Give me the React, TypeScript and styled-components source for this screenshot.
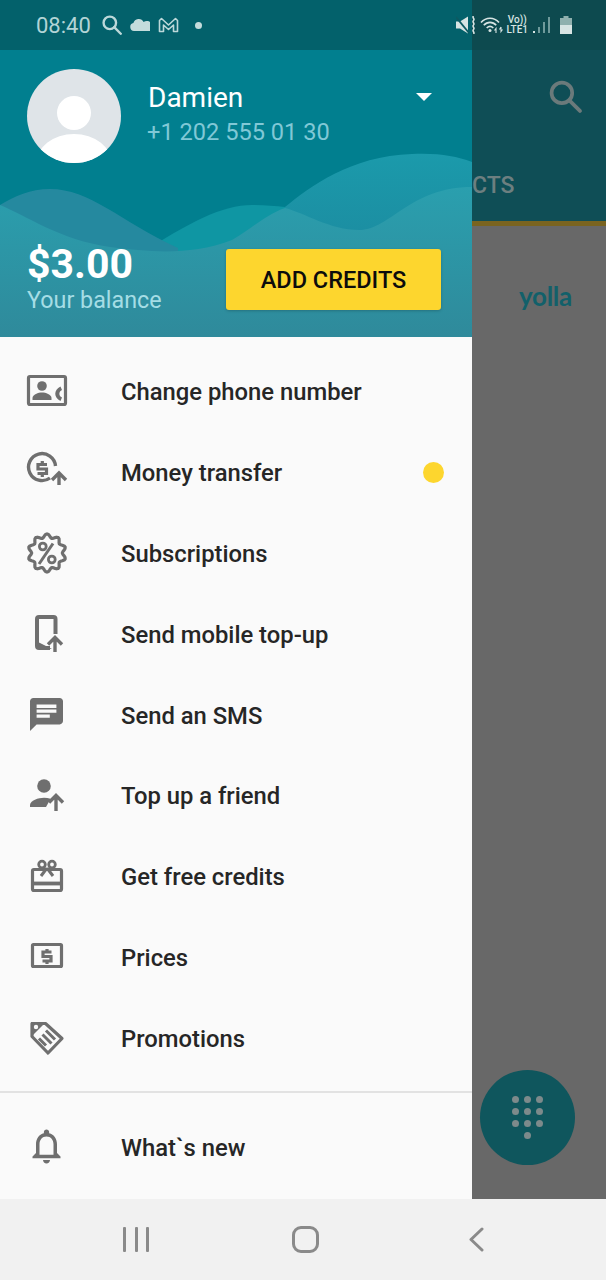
import React from "react"
import styled, { createGlobalStyle } from "styled-components"

const GlobalStyle = createGlobalStyle`
  html, body {
    margin: 0;
    padding: 0;
    background: #f1f1f1;
  }
  * {
    box-sizing: border-box;
  }
`

const ICON_GREY = "#6f6f6f"

// ten-lobed outline of the subscriptions badge
const badgeOutline = () => {
  const pts: string[] = []
  for (let i = 0; i < 80; i++) {
    const t = (i / 80) * Math.PI * 2
    const r = 17.2 + 1.9 * Math.cos(t * 10)
    const x = 22 + r * Math.sin(t)
    const y = 21 - r * Math.cos(t)
    pts.push(`${x.toFixed(2)} ${y.toFixed(2)}`)
  }
  return `M${pts.join("L")}Z`
}

const PhoneCardIcon = () => (
  <MenuSvg viewBox="0 0 44 44">
    <rect x="3.5" y="6.5" width="37" height="28" rx="1.5" fill="none" stroke={ICON_GREY} strokeWidth="3.2" />
    <circle cx="17" cy="16" r="4.8" fill={ICON_GREY} />
    <path d="M7.5 30v-2c0-3.6 5.9-5.600 9.500-5.600s9.500 2 9.500 5.600v2z" fill={ICON_GREY} />
    <path d="M35.500 16.500C28.500 20 28.500 27.500 35.500 31L37 27.500C33.500 26 33.500 21.500 37 20z" fill={ICON_GREY} />
  </MenuSvg>
)

const MoneyTransferIcon = () => (
  <MenuSvg viewBox="0 0 44 44">
    <path d="M30.500 15A13.500 13.500 0 1 0 25 27" fill="none" stroke={ICON_GREY} strokeWidth="3.400" />
    <path d="M22 13.500H13V18H21.500V22.500H12.500" fill="none" stroke={ICON_GREY} strokeWidth="3.200" />
    <path d="M17.300 10V13M17.300 23V26" stroke={ICON_GREY} strokeWidth="3.200" />
    <path d="M27 29L34 22L41 29M34 23V34" fill="none" stroke={ICON_GREY} strokeWidth="3.400" />
  </MenuSvg>
)

const DiscountBadgeIcon = () => (
  <MenuSvg viewBox="0 0 44 44">
    <path d={badgeOutline()} fill="none" stroke={ICON_GREY} strokeWidth="3.200" strokeLinejoin="round" />
    <circle cx="17.800" cy="14.500" r="3.400" fill="none" stroke={ICON_GREY} strokeWidth="2.800" />
    <circle cx="26.800" cy="27.500" r="3.400" fill="none" stroke={ICON_GREY} strokeWidth="2.800" />
    <path d="M28 11.500L14 32" stroke={ICON_GREY} strokeWidth="3" />
  </MenuSvg>
)

const MobileTopUpIcon = () => (
  <MenuSvg viewBox="0 0 44 44">
    <path d="M30.500 21V6a2 2 0 0 0-2-2H14a2 2 0 0 0-2 2V33a2 2 0 0 0 2 2H25" fill="none" stroke={ICON_GREY} strokeWidth="4" />
    <path d="M13 36V29L27 36z" fill={ICON_GREY} />
    <path d="M23 31.500L30 24.500L37 31.500M30 25.500V39" fill="none" stroke={ICON_GREY} strokeWidth="3.400" />
  </MenuSvg>
)

const MessageIcon = () => (
  <MenuSvg viewBox="0 0 44 44">
    <path
      transform="translate(1.700 .7) scale(1.650)"
      d="M20 2H4c-1.100 0-1.990.9-1.990 2L2 22l4-4h14c1.100 0 2-.9 2-2V4c0-1.100-.9-2-2-2zm-6 12H6v-2h8v2zm4-3H6V9h12v2zm0-3H6V6h12v2z"
      fill={ICON_GREY}
    />
  </MenuSvg>
)

const FriendTopUpIcon = () => (
  <MenuSvg viewBox="0 0 44 44">
    <circle cx="19" cy="12" r="6.800" fill={ICON_GREY} />
    <path d="M5 33v-2c0-4.500 8.500-7.300 14-7.300 2.200 0 4.500.4 6.600 1L21 33z" fill={ICON_GREY} />
    <path d="M24 28.500L31 21.500L38 28.500M31 22.500V37" fill="none" stroke={ICON_GREY} strokeWidth="3.400" />
  </MenuSvg>
)

const GiftCardIcon = () => (
  <MenuSvg viewBox="0 0 44 44">
    <rect x="7.500" y="14.500" width="29" height="21" rx="1.500" fill="none" stroke={ICON_GREY} strokeWidth="3.200" />
    <path d="M8 28.500H36" stroke={ICON_GREY} strokeWidth="3.800" />
    <circle cx="17" cy="9.500" r="3.300" fill="none" stroke={ICON_GREY} strokeWidth="2.800" />
    <circle cx="27" cy="9.500" r="3.300" fill="none" stroke={ICON_GREY} strokeWidth="2.800" />
    <path d="M22 13L16 21M22 13L28 21" stroke={ICON_GREY} strokeWidth="3" />
  </MenuSvg>
)

const PriceIcon = () => (
  <MenuSvg viewBox="0 0 44 44">
    <rect x="7.500" y="8.500" width="29" height="22" rx="1" fill="none" stroke={ICON_GREY} strokeWidth="3.200" />
    <path d="M26.500 16H18V20.500H26V25H17.500" fill="none" stroke={ICON_GREY} strokeWidth="3.200" />
    <path d="M22 13V16M22 25V28" stroke={ICON_GREY} strokeWidth="3.200" />
  </MenuSvg>
)

const TagIcon = () => (
  <MenuSvg viewBox="0 0 44 44">
    <path d="M7 6.500H20.500L37 21.500L23 36L7 19.500z" fill="none" stroke={ICON_GREY} strokeWidth="3.200" strokeLinejoin="round" />
    <path d="M6 5H21L6 20z" fill={ICON_GREY} />
    <circle cx="11" cy="10" r="2.200" fill="#fafafa" />
    <path d="M21 13.500L30 22.500M17.500 17.500L26.500 26.500M14 21.500L21 28.500" stroke={ICON_GREY} strokeWidth="3" />
  </MenuSvg>
)

const BellIcon = () => (
  <MenuSvg viewBox="0 0 44 44">
    <path
      transform="translate(.5 -1) scale(1.750)"
      d="M12 22c1.100 0 2-.9 2-2h-4c0 1.100.9 2 2 2zm6-6v-5c0-3.070-1.630-5.640-4.500-6.320V4c0-.83-.67-1.500-1.500-1.500s-1.500.67-1.500 1.500v.68C7.640 5.360 6 7.920 6 11v5l-2 2v1h16v-1l-2-2zm-2 1H8v-6c0-2.480 1.510-4.500 4-4.500s4 2.020 4 4.500v6z"
      fill={ICON_GREY}
    />
  </MenuSvg>
)

const SearchGlyph = ({ size, color, weight }: { size: number; color: string; weight: number }) => (
  <svg width={size} height={size} viewBox="0 0 32 32" style={{ display: "block" }}>
    <circle cx="12.500" cy="12.500" r="10" fill="none" stroke={color} strokeWidth={weight} />
    <path d="M19.500 19.500L30 30" stroke={color} strokeWidth={weight} strokeLinecap="round" />
  </svg>
)

const menuTop = [
  { label: "Change phone number", icon: <PhoneCardIcon /> },
  { label: "Money transfer", icon: <MoneyTransferIcon />, dot: true },
  { label: "Subscriptions", icon: <DiscountBadgeIcon /> },
  { label: "Send mobile top-up", icon: <MobileTopUpIcon /> },
  { label: "Send an SMS", icon: <MessageIcon /> },
  { label: "Top up a friend", icon: <FriendTopUpIcon /> },
  { label: "Get free credits", icon: <GiftCardIcon /> },
  { label: "Prices", icon: <PriceIcon /> },
  { label: "Promotions", icon: <TagIcon /> },
]

const App = () => {
  return (
    <Screen>
      <GlobalStyle />
      <StatusBar>
        <StatusGroup>
          <Clock>08:40</Clock>
          <SearchGlyph size={20} color="#bcd8d9" weight={3.800} />
          <svg width="20" height="12" viewBox="0 0 20 12">
            <path d="M4 12a4 4 0 0 1-.6-7.900A5.500 5.500 0 0 1 13.600 3 4.600 4.600 0 0 1 20 12z" fill="#c4dcdc" />
          </svg>
          <svg width="21" height="16" viewBox="0 0 21 16">
            <path d="M1.500 14.500V3.500L3.500 1.500L10.500 8L17.500 1.500L19.500 3.500V14.500H15.500V8L10.500 12.500L5.500 8V14.500z" fill="none" stroke="#bcd8d9" strokeWidth="1.600" strokeLinejoin="round" />
          </svg>
          <StatusDot />
        </StatusGroup>
        <StatusGroup $gap={4}>
          <svg width="20" height="18" viewBox="0 0 20 18">
            <path d="M0 5.500H4L12 .5V17.500L4 12.500H0z" fill="#d7e4e3" />
            <path d="M0 1L13 17" stroke="#0c5a62" strokeWidth="1.800" />
            <path d="M17.500 0c-1.800 1.500 1.800 3 0 4.500s1.800 3 0 4.500 1.800 3 0 4.500 1.800 3 0 4.500" fill="none" stroke="#d7e4e3" strokeWidth="1.600" />
          </svg>
          <svg width="23" height="18" viewBox="0 0 23 18">
            <path d="M1 6.500C6 .8 14 .8 19 6.500M3.800 9.200C7.300 5.300 12.700 5.300 16.200 9.200M6.700 12C8.700 10 11.300 10 13.300 12" fill="none" stroke="#d7e4e3" strokeWidth="1.700" />
            <circle cx="10" cy="14.500" r="1.500" fill="#d7e4e3" />
            <path d="M14.500 14.500L16 12.500V17M21 11V15.500L22.500 13.500M19.500 13.500L21 11" fill="none" stroke="#d7e4e3" strokeWidth="1.100" />
          </svg>
          <NetworkLabel>
            <span>Vo))</span>
            <span>LTE1</span>
          </NetworkLabel>
          <svg width="17" height="18" viewBox="0 0 17 18">
            <rect x="0" y="15" width="2" height="2" fill="#d7e4e3" />
            <rect x="5" y="11" width="2" height="6" fill="#6f9a9b" />
            <rect x="10" y="6" width="2" height="11" fill="#6f9a9b" />
            <rect x="15" y="1" width="2" height="16" fill="#6f9a9b" />
          </svg>
          <BatterySvg viewBox="0 0 12 18">
            <rect x="3.500" y="0" width="5" height="2" fill="#8fb0ae" />
            <rect x="0" y="2" width="12" height="7" fill="#8fb0ae" />
            <rect x="0" y="9" width="12" height="9" fill="#d7e4e3" />
          </BatterySvg>
        </StatusGroup>
      </StatusBar>

      <Content>
        <Drawer>
          <Header>
            <Waves viewBox="0 0 472 287" preserveAspectRatio="none">
              <defs>
                <linearGradient id="backShade" x1="0" y1="0" x2="0" y2="1">
                  <stop offset="0" stopColor="#1b9aab" />
                  <stop offset="0.6" stopColor="#1c8a9f" />
                </linearGradient>
                <linearGradient id="frontShade" x1="0" y1="0" x2="0" y2="1">
                  <stop offset="0" stopColor="#2a9fae" />
                  <stop offset="1" stopColor="#2f8a9b" />
                </linearGradient>
              </defs>
              <path d="M140 204C190 172 222 155 252 155C265 155 275 156 285 157V287H140z" fill="#0f96a3" />
              <path d="M0 155C15 146 30 139 50 139C90 139 118 170 178 198V287H0z" fill="#25899f" />
              <path d="M285 157C310 137 350 106 412 104C440 103 455 106 472 112V287H285z" fill="url(#backShade)" />
              <path d="M0 155C25 165 60 190 110 197C150 202 190 206 232 190C250 180 265 165 285 158C305 163 330 180 359 180C390 180 410 137 472 137V287H0z" fill="url(#frontShade)" />
            </Waves>
            <Account>
              <Avatar>
                <AvatarHead />
                <AvatarBody />
              </Avatar>
              <UserInfo>
                <UserName>Damien</UserName>
                <UserPhone>+1 202 555 01 30</UserPhone>
              </UserInfo>
              <AccountCaret />
            </Account>
            <BalanceRow>
              <Balance>
                <Amount>$3.00</Amount>
                <AmountLabel>Your balance</AmountLabel>
              </Balance>
              <AddCredits>ADD CREDITS</AddCredits>
            </BalanceRow>
          </Header>

          <Menu>
            <MenuGroup>
              {menuTop.map((item) => (
                <MenuRow key={item.label}>
                  <IconSlot>{item.icon}</IconSlot>
                  <MenuLabel>{item.label}</MenuLabel>
                  {item.dot && <NewDot />}
                </MenuRow>
              ))}
            </MenuGroup>
            <BottomGroup>
              <MenuRow>
                <IconSlot>
                  <BellIcon />
                </IconSlot>
                <MenuLabel>What`s new</MenuLabel>
              </MenuRow>
            </BottomGroup>
          </Menu>
        </Drawer>

        <Behind>
          <BehindBar>
            <BehindSearch>
              <SearchGlyph size={33} color="#6b7a7b" weight={3.600} />
            </BehindSearch>
            <BehindTab>CTS</BehindTab>
          </BehindBar>
          <BehindBody>
            <BrandName>yolla</BrandName>
          </BehindBody>
          <DialButton>
            <DialGrid>
              {Array.from({ length: 9 }, (_, i) => (
                <DialDot key={i} />
              ))}
              <DialDot $col={2} />
            </DialGrid>
          </DialButton>
        </Behind>
      </Content>

      <NavBar>
        <NavRecents>
          <i />
          <i />
          <i />
        </NavRecents>
        <NavHome />
        <svg width="16" height="25" viewBox="0 0 16 25">
          <path d="M14 2L3 12.500L14 23" fill="none" stroke="#8a8a8a" strokeWidth="3" strokeLinecap="round" strokeLinejoin="round" />
        </svg>
      </NavBar>
    </Screen>
  )
}

const Screen = styled.div`
  width: 606px;
  height: 1280px;
  display: flex;
  flex-direction: column;
  overflow: hidden;
  font-family: Roboto, "Liberation Sans", sans-serif;
`

const StatusBar = styled.div`
  height: 50px;
  flex: none;
  display: flex;
  align-items: center;
  justify-content: space-between;
  padding: 0 34px 0 36px;
  background: linear-gradient(to right, #03616b 472px, #0d4a4f 472px);
`

const StatusGroup = styled.div<{ $gap?: number }>`
  display: flex;
  align-items: center;
  gap: ${(p) => p.$gap ?? 8}px;
`

const Clock = styled.span`
  font-size: 22px;
  color: #b2d4d6;
  margin-right: 3px;
`

const StatusDot = styled.span`
  width: 7px;
  height: 7px;
  margin-left: 8px;
  border-radius: 50%;
  background: #c4dcdc;
`

const NetworkLabel = styled.div`
  display: flex;
  flex-direction: column;
  align-items: center;
  margin: 0 1px 0 -1px;
  font-size: 10px;
  line-height: 10px;
  font-weight: 500;
  color: #d7e4e3;
`

const BatterySvg = styled.svg`
  width: 12px;
  height: 18px;
  margin-left: 6px;
`

const Content = styled.div`
  flex: 1;
  min-height: 0;
  display: flex;
`

const Drawer = styled.div`
  width: 472px;
  flex: none;
  display: flex;
  flex-direction: column;
  background: #fafafa;
`

const Header = styled.div`
  position: relative;
  height: 287px;
  flex: none;
  display: flex;
  flex-direction: column;
  justify-content: space-between;
  padding: 19px 31px 23px 27px;
  background: #017f8f;
`

const Waves = styled.svg`
  position: absolute;
  inset: 0;
  width: 100%;
  height: 100%;
`

const Account = styled.div`
  position: relative;
  display: flex;
  align-items: flex-start;
  gap: 27px;
`

const Avatar = styled.div`
  position: relative;
  width: 94px;
  height: 94px;
  flex: none;
  border-radius: 50%;
  overflow: hidden;
  background: #dfe4e8;
`

const AvatarHead = styled.div`
  position: absolute;
  top: 27px;
  left: 30px;
  width: 34px;
  height: 34px;
  border-radius: 50%;
  background: #fff;
`

const AvatarBody = styled.div`
  position: absolute;
  top: 65px;
  left: 9px;
  width: 76px;
  height: 60px;
  border-radius: 50%;
  background: #fff;
`

const UserInfo = styled.div`
  flex: 1;
  padding-top: 11px;
`

const UserName = styled.div`
  font-size: 28px;
  line-height: 36px;
  color: #fff;
`

const UserPhone = styled.div`
  font-size: 23.600px;
  line-height: 32px;
  margin-left: -1px;
  color: #80c8d6;
`

const AccountCaret = styled.div`
  width: 0;
  height: 0;
  margin: 24px 9px 0 0;
  border-left: 8px solid transparent;
  border-right: 8px solid transparent;
  border-top: 8px solid #fff;
`

const BalanceRow = styled.div`
  position: relative;
  display: flex;
  align-items: flex-end;
  justify-content: space-between;
`

const Balance = styled.div`
  display: flex;
  flex-direction: column;
`

const Amount = styled.div`
  font-size: 41px;
  line-height: 44px;
  font-weight: 700;
  color: #fff;
`

const AmountLabel = styled.div`
  font-size: 23.300px;
  line-height: 28px;
  color: #a5dde5;
`

const AddCredits = styled.button`
  width: 215px;
  height: 61px;
  margin-bottom: 4px;
  border: 0;
  border-radius: 3px;
  background: #fdd62e;
  box-shadow: 0 1px 3px rgba(0, 0, 0, 0.2);
  font-family: inherit;
  font-size: 23.500px;
  font-weight: 500;
  color: #0c0c0c;
`

const Menu = styled.div`
  flex: 1;
  display: flex;
  flex-direction: column;
  padding-top: 14.500px;
`

const MenuGroup = styled.div`
  display: flex;
  flex-direction: column;
  padding-bottom: 11.500px;
  border-bottom: 2px solid #e2e2e2;
`

const BottomGroup = styled.div`
  padding-top: 14.500px;
`

const MenuRow = styled.div`
  height: 80.900px;
  display: flex;
  align-items: center;
  gap: 52px;
  padding: 0 28px 0 25px;
`

const IconSlot = styled.div`
  width: 44px;
  height: 44px;
  flex: none;
`

const MenuSvg = styled.svg`
  display: block;
  width: 44px;
  height: 44px;
`

const MenuLabel = styled.div`
  flex: 1;
  font-size: 23.800px;
  font-weight: 500;
  color: #262626;
`

const NewDot = styled.span`
  width: 21px;
  height: 21px;
  border-radius: 50%;
  background: #fdd62e;
`

const Behind = styled.div`
  position: relative;
  flex: 1;
  display: flex;
  flex-direction: column;
  background: #686868;
`

const BehindBar = styled.div`
  height: 176px;
  flex: none;
  display: flex;
  flex-direction: column;
  align-items: flex-start;
  background: #0f4e56;
  border-bottom: 5px solid #7a6420;
`

const BehindSearch = styled.div`
  margin: 30px 0 0 77px;
`

const BehindTab = styled.div`
  margin-top: 59px;
  font-size: 23px;
  line-height: 28px;
  font-weight: 500;
  color: #6d7f80;
`

const BehindBody = styled.div`
  flex: 1;
  padding: 54px 0 0 47px;
`

const BrandName = styled.div`
  font-family: Lato, "Open Sans", sans-serif;
  font-size: 26px;
  line-height: 32px;
  font-weight: 700;
  letter-spacing: -0.3px;
  color: #12606a;
`

const DialButton = styled.div`
  position: absolute;
  left: 8px;
  top: 1020px;
  width: 95px;
  height: 95px;
  display: flex;
  align-items: center;
  justify-content: center;
  border-radius: 50%;
  background: #0f565d;
`

const DialGrid = styled.div`
  display: grid;
  grid-template-columns: repeat(3, 7px);
  grid-auto-rows: 7px;
  gap: 5.300px 5px;
`

const DialDot = styled.span<{ $col?: number }>`
  border-radius: 50%;
  background: #7d8a8b;
  grid-column: ${(p) => p.$col ?? "auto"};
`

const NavBar = styled.div`
  height: 81px;
  flex: none;
  display: flex;
  align-items: center;
  justify-content: space-between;
  padding: 0 122px 1px 123px;
  background: #f1f1f1;
`

const NavRecents = styled.div`
  display: flex;
  gap: 8.500px;

  i {
    display: block;
    width: 3px;
    height: 25px;
    border-radius: 1px;
    background: #8a8a8a;
  }
`

const NavHome = styled.div`
  width: 27px;
  height: 27px;
  margin-right: 6px;
  border: 3px solid #8a8a8a;
  border-radius: 9px;
`

export default App
